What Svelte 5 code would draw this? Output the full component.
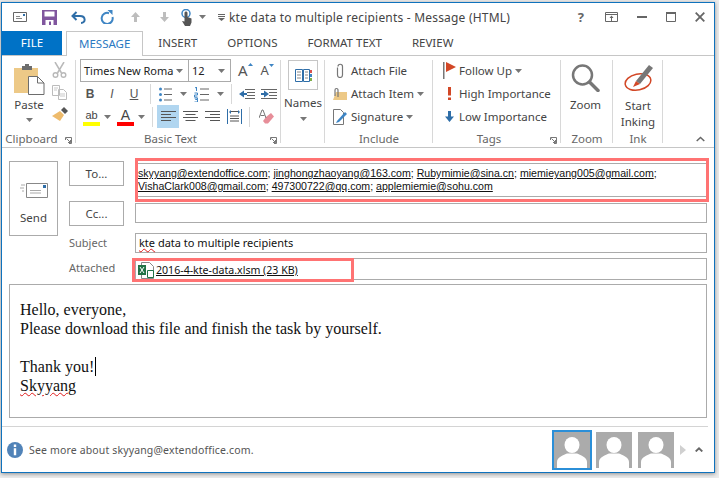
<script>
  const tabs = ['INSERT', 'OPTIONS', 'FORMAT TEXT', 'REVIEW'];
  const recipients = [
    ['skyyang@extendoffice.com', 'jinghongzhaoyang@163.com', 'Rubymimie@sina.cn', 'miemieyang005@gmail.com'],
    ['VishaClark008@gmail.com', '497300722@qq.com', 'applemiemie@sohu.com'],
  ];
</script>

{#snippet caret()}
  <svg class="caret" width="7" height="4" viewBox="0 0 7 4"><path d="M0 0h7L3.500 4z" fill="#777" /></svg>
{/snippet}

{#snippet launcher()}
  <svg class="launcher" width="7" height="7" viewBox="0 0 7 7"><path d="M.5 3V.5h6v6H4M1.500 1.500l4 4M5.500 3v2.500H3" fill="none" stroke="#777" /></svg>
{/snippet}

{#snippet avatar()}
  <svg width="36" height="36" viewBox="0 0 36 36">
    <rect width="36" height="36" fill="#ababab" />
    <ellipse cx="18" cy="13" rx="7.500" ry="8" fill="#fff" />
    <path d="M3 36v-6c0-5 7-7 10-8.500h10c3 1.500 10 3.500 10 8.500v6z" fill="#fff" />
  </svg>
{/snippet}

<div class="window">
  <header class="titlebar">
    <div class="qat">
      <svg width="14" height="10" viewBox="0 0 14 10"><path d="M.5.500h13v9H.5z" fill="none" stroke="#666" /><path d="M3 4.500h4M3 6.500h6" stroke="#888" /><path d="M10 2h2v2h-2z" fill="#2f6ea8" /></svg>
      <svg width="15" height="15" viewBox="0 0 15 15"><path d="M0 0h15v15H0z" fill="#80569e" /><path d="M2.500 1.500h10v5h-10z" fill="#fff" /><path d="M3.500 10h8v5h-8z" fill="#fff" /><path d="M7 11.500h2V15H7z" fill="#80569e" /></svg>
      <svg class="undo" width="15" height="13" viewBox="0 0 15 13"><path d="M5.500 1 1.500 5l4 4M2 5h7c6 0 6 7 1 7" fill="none" stroke="#2f6ea8" stroke-width="2" /></svg>
      <svg class="redo" width="14" height="14" viewBox="0 0 14 14"><path d="M9 3.200A5.500 5.500 0 1 0 12.500 7" fill="none" stroke="#3e85c4" stroke-width="2" /><path d="M7.500 0h5v5z" fill="#3e85c4" /></svg>
      <svg class="up" width="9" height="10" viewBox="0 0 9 10"><path d="M4.500 0 9 5H6v5H3V5H0z" fill="#bdbdbd" /></svg>
      <svg class="down" width="9" height="10" viewBox="0 0 9 10"><path d="M4.500 10 9 5H6V0H3v5H0z" fill="#bdbdbd" /></svg>
      <svg class="touch" width="12" height="17" viewBox="0 0 12 17"><circle cx="5" cy="4.500" r="4" fill="none" stroke="#3e85c4" stroke-width="1.500" /><path d="M3.500 4c0-2 3-2 3 0v4l4 1.500v4L9 17H4L1 12l2.500.5z" fill="#555" /></svg>
      {@render caret()}
      <svg class="more" width="7" height="7" viewBox="0 0 7 7"><path d="M0 .5h7M0 2.500h7" stroke="#666" /><path d="M0 4h7L3.500 7z" fill="#666" /></svg>
    </div>
    <h1>kte data to multiple recipients - Message (HTML)</h1>
    <div class="winctl">
      <span class="help">?</span>
      <svg width="13" height="10" viewBox="0 0 13 10"><path d="M.5.500h12v9H.5zM1 2.500h11" fill="none" stroke="#666" /><path d="M6.500 3.500 4.500 6h1.500v3h1V6h1.500z" fill="#666" /></svg>
      <svg width="10" height="3" viewBox="0 0 10 3"><path d="M0 0h10v2H0z" fill="#666" /></svg>
      <svg width="10" height="10" viewBox="0 0 10 10"><path d="M.5.500h9v9h-9z" fill="none" stroke="#666" /><path d="M0 0h10v2H0z" fill="#666" /></svg>
      <svg width="10" height="10" viewBox="0 0 10 10"><path d="m.700.700 8.600 8.600m0-8.600L.700 9.300" stroke="#666" stroke-width="1.800" /></svg>
    </div>
  </header>

  <nav class="tabs">
    <span class="file">FILE</span>
    <span class="tab active">MESSAGE</span>
    {#each tabs as tab}
      <span class="tab">{tab}</span>
    {/each}
  </nav>

  <section class="ribbon">
    <div class="group clipboard">
      <div class="content">
        <div class="paste">
          <svg width="31" height="31" viewBox="0 0 31 31">
            <path d="M0 4h24v25H0z" fill="#edc987" />
            <path d="M8 2h3V0h4v2h3v4H8z" fill="#6d6d6d" />
            <path d="M14.500 12.500h9l6.500 6.500v11.500H14.500z" fill="#fff" stroke="#6d6d6d" />
            <path d="M23.500 12.500v6.500H30" fill="none" stroke="#6d6d6d" />
          </svg>
          <span>Paste</span>
          {@render caret()}
        </div>
        <div class="paste-tools">
          <svg width="15" height="16" viewBox="0 0 15 16"><path d="M3 0l6.500 11M12 0 5.500 11" stroke="#b9b9b9" stroke-width="1.500" /><circle cx="3.500" cy="13" r="2.300" fill="none" stroke="#b9b9b9" stroke-width="1.400" /><circle cx="11.500" cy="13" r="2.300" fill="none" stroke="#b9b9b9" stroke-width="1.400" /></svg>
          <svg width="15" height="15" viewBox="0 0 15 15"><path d="M.5.500h7v10h-7zM6.500 4.500h5l3 3v7h-8z" fill="#fff" stroke="#bcbcbc" /><path d="M2 3h4M2 5h3M8 9h5M8 11h5" stroke="#c9c9c9" /></svg>
          <svg width="16" height="15" viewBox="0 0 16 15"><path d="M9 3l3-3 4 4-3 3z" fill="#555" /><path d="M8 4l4 4-4 6-8-5z" fill="#eebb6c" /></svg>
        </div>
      </div>
      <div class="label">Clipboard {@render launcher()}</div>
    </div>

    <div class="group basic">
      <div class="content column">
        <div class="row first">
          <span class="combo font">Times New Roma {@render caret()}</span>
          <span class="combo size">12 {@render caret()}</span>
          <span class="grow">A<svg width="5" height="3" viewBox="0 0 5 3"><path d="M0 3h5L2.500 0z" fill="#3e85c4" /></svg></span>
          <span class="shrink">A<svg width="5" height="3" viewBox="0 0 5 3"><path d="M0 0h5L2.500 3z" fill="#3e85c4" /></svg></span>
        </div>
        <div class="row second">
          <b class="fmt">B</b>
          <i class="fmt">I</i>
          <u class="fmt">U</u>
          <span class="sep"></span>
          <svg class="bullets" width="13" height="15" viewBox="0 0 13 15"><path d="M5 2h8M5 7.500h8M5 13h8" stroke="#666" /><circle cx="1.500" cy="2" r="1.500" fill="#3e85c4" /><circle cx="1.500" cy="7.500" r="1.500" fill="#3e85c4" /><circle cx="1.500" cy="13" r="1.500" fill="#3e85c4" /></svg>
          {@render caret()}
          <svg class="numbering" width="15" height="15" viewBox="0 0 15 15"><path d="M6 2h9M6 7.500h9M6 13h9" stroke="#666" /><path d="M1 1l1.500-1v4M.5 6h3v2h-3v2h3M.5 11h3v1.500H1.500h2V15h-3" fill="none" stroke="#3e85c4" /></svg>
          {@render caret()}
          <span class="sep"></span>
          <svg class="outdent" width="16" height="11" viewBox="0 0 16 11"><path d="M6 .500h10M8 3.500h8M8 6.500h8M6 9.500h10" stroke="#666" /><path d="M0 5l5-3.500V4h3v2H5v2.500z" fill="#2f6ea8" /></svg>
          <svg class="indent" width="16" height="11" viewBox="0 0 16 11"><path d="M0 .500h16M8 3.500h8M8 6.500h8M0 9.500h16" stroke="#666" /><path d="M8 5 3 1.500V4H0v2h3v2.500z" fill="#2f6ea8" /></svg>
        </div>
        <div class="row third">
          <span class="hl">ab<i></i></span>
          {@render caret()}
          <span class="color">A<i></i></span>
          {@render caret()}
          <span class="sep"></span>
          <span class="align on"><svg width="15" height="11" viewBox="0 0 15 11"><path d="M0 .500h15M0 3.500h10M0 6.500h15M0 9.500h10" stroke="#555" /></svg></span>
          <span class="align"><svg width="15" height="11" viewBox="0 0 15 11"><path d="M0 .500h15M2.500 3.500h10M0 6.500h15M2.500 9.500h10" stroke="#555" /></svg></span>
          <span class="align"><svg width="15" height="11" viewBox="0 0 15 11"><path d="M0 .500h15M5 3.500h10M0 6.500h15M5 9.500h10" stroke="#555" /></svg></span>
          <span class="align"><svg width="15" height="15" viewBox="0 0 15 15"><path d="M.5 0v15M14.500 0v15" stroke="#2f6ea8" /><path d="M3 2.500h9M3 7h9M3 9.500h9M3 12h9" stroke="#555" /><path d="M2 3l2-2v4zM13 3l-2-2v4z" fill="#2f6ea8" /></svg></span>
          <span class="sep"></span>
          <svg class="eraser" width="15" height="16" viewBox="0 0 15 16"><path d="M7 8l5-4 3 3.500-6 7H6L4 12z" fill="#e78e99" /><path d="M0 9 3 1h1l3 8M1.500 6.500h4" fill="none" stroke="#777" /></svg>
        </div>
      </div>
      <div class="label">Basic Text {@render launcher()}</div>
    </div>

    <div class="group names">
      <div class="content column center">
        <span class="names-box">
          <svg width="17" height="13" viewBox="0 0 17 13"><path d="M.5.500h7v12h-7zM8.500.500h6v12h-6z" fill="#fff" stroke="#2f6ea8" /><path d="M2 3h4M2 6h4M2 9h4M10 3h3M10 6h3M10 9h3" stroke="#888" /><path d="M15 1h2v3h-2z" fill="#d9534f" /><path d="M15 5h2v3h-2z" fill="#3e85c4" /><path d="M15 9h2v3h-2z" fill="#7fae4a" /></svg>
        </span>
        <span class="big-text">Names</span>
        {@render caret()}
      </div>
    </div>

    <div class="group include">
      <div class="content column list">
        <div class="item"><span class="slot"><svg width="10" height="15" viewBox="0 0 10 15"><path d="M2.500 4v7.500a2.500 2.500 0 0 0 5 0V3a2.200 2.200 0 0 0-4.500 0" transform="translate(0 .5)" fill="none" stroke="#777" stroke-width="1.200" /></svg></span>Attach File</div>
        <div class="item"><span class="slot"><svg width="14" height="14" viewBox="0 0 14 14"><path d="M3 5h11v8H0z" fill="#edc987" /><path d="M2 9V3a1.500 1.500 0 0 1 3 0v7" fill="none" stroke="#777" stroke-width="1.200" /></svg></span>Attach Item{@render caret()}</div>
        <div class="item"><span class="slot"><svg width="14" height="16" viewBox="0 0 14 16"><path d="M.5.500h7l3 3v12H.5z" fill="#fff" stroke="#777" /><path d="M4 12l8-9 2 2-8 8-3 1z" fill="#3e85c4" /></svg></span>Signature{@render caret()}</div>
      </div>
      <div class="label">Include</div>
    </div>

    <div class="group tags">
      <div class="content column list">
        <div class="item"><span class="slot"><svg width="13" height="17" viewBox="0 0 13 17"><path d="M0 0h1.500v17H0z" fill="#777" /><path d="M3 0l10 5-10 5z" fill="#d24726" /></svg></span>Follow Up{@render caret()}</div>
        <div class="item"><span class="slot"><svg width="13" height="13" viewBox="0 0 13 13"><path d="M5 0h3v8.500H5zM5 10.500h3V13H5z" fill="#d24726" /></svg></span>High Importance</div>
        <div class="item"><span class="slot"><svg width="13" height="11" viewBox="0 0 13 11"><path d="M6.500 11 11 5.500H8V0H5v5.500H2z" fill="#2f6ea8" /></svg></span>Low Importance</div>
      </div>
      <div class="label">Tags {@render launcher()}</div>
    </div>

    <div class="group zoom">
      <div class="content column center">
        <svg class="big-icon" width="29" height="28" viewBox="0 0 29 28"><circle cx="11.500" cy="11" r="9.500" fill="none" stroke="#777" stroke-width="2.500" /><path d="m18.500 18 8.500 8.500" stroke="#777" stroke-width="3.500" stroke-linecap="round" /></svg>
        <span class="big-text">Zoom</span>
      </div>
      <div class="label">Zoom</div>
    </div>

    <div class="group ink">
      <div class="content column center">
        <svg class="big-icon" width="29" height="29" viewBox="0 0 29 29"><ellipse cx="14" cy="18" rx="13" ry="8" transform="rotate(-12 14 18)" fill="none" stroke="#d24726" stroke-width="1.500" /><path d="M12 17 25 1l4 3-13 16z" fill="#777" /><path d="M9 23l3-6 4 3z" fill="#d24726" /></svg>
        <span class="big-text">Start<br />Inking</span>
      </div>
      <div class="label">Ink</div>
    </div>

    <svg class="collapse" width="9" height="6" viewBox="0 0 9 6"><path d="M.7 5 4.500 1.500 8.300 5" fill="none" stroke="#666" stroke-width="1.500" /></svg>
  </section>

  <section class="compose">
    <button class="send">
      <svg width="28" height="15" viewBox="0 0 28 15"><path d="M6.500.500h21v14h-21z" fill="#fff" stroke="#888" /><path d="M10 7.500h11M10 10h11" stroke="#aaa" /><path d="M23 2h3v3h-3z" fill="#2f6ea8" /><path d="M1 2h4M0 5h4M2 8h2" stroke="#aaa" /></svg>
      <span>Send</span>
    </button>
    <div class="fields">
      <button class="addr to">To...</button>
      <div class="input to-input highlighted">
        {#each recipients as line}
          <div>
            {#each line as mail, i}<u>{mail}</u>{i < line.length - 1 || line.length === 4 ? '; ' : ''}{/each}
          </div>
        {/each}
      </div>
      <button class="addr cc">Cc...</button>
      <div class="input cc-input"></div>
      <span class="field-label">Subject</span>
      <div class="input subject"><span class="wavy">kte</span> data to multiple recipients</div>
      <span class="field-label">Attached</span>
      <div class="input attach-input">
        <div class="attachment">
          <svg width="18" height="17" viewBox="0 0 18 17"><path d="M3.500.500h8l4 4v12h-12z" fill="#fff" stroke="#888" /><path d="M0 3h8v10H0z" fill="#217346" /><path d="m2 5 4 6m0-6-4 6" stroke="#fff" /><path d="M9.500 8.500h6v7h-6z" fill="#fff" stroke="#217346" /></svg>
          <u>2016-4-kte-data.xlsm (23 KB)</u>
        </div>
      </div>
    </div>
  </section>

  <article class="message">
    <p>Hello, everyone,</p>
    <p>Please download this file and finish the task by yourself.</p>
    <p>&nbsp;</p>
    <p>Thank you!<span class="cursor"></span></p>
    <p><span class="wavy">Skyyang</span></p>
  </article>

  <footer class="people">
    <svg width="16" height="16" viewBox="0 0 16 16"><circle cx="8" cy="8" r="8" fill="#5183b8" /><path d="M6.800 2.500h2.400v2.400H6.800zM6.800 6.300h2.400v7H6.800z" fill="#fff" /></svg>
    <span class="see-more">See more about skyyang@extendoffice.com.</span>
    <div class="avatars">
      <span class="current">{@render avatar()}</span>
      {@render avatar()}
      {@render avatar()}
      <svg class="next" width="6" height="10" viewBox="0 0 6 10"><path d="M0 0l6 5-6 5z" fill="#d0d0d0" /></svg>
      <svg class="hide" width="8" height="5" viewBox="0 0 8 5"><path d="M.7 4.500 4 1.300l3.300 3.200" fill="none" stroke="#666" stroke-width="1.800" /></svg>
    </div>
  </footer>
</div>

<style>
  :global(body) {
    background: #ececec;
    height: 478px;
    overflow: hidden;
  }

  .window {
    box-sizing: border-box;
    width: 714px;
    height: 471px;
    margin: 2px 0 0 1px;
    background: #fff;
    border: 1px solid #0f72bd;
    box-shadow: 0 1px 4px #8f8f8f;
    display: flex;
    flex-direction: column;
    font-family: 'Noto Sans', sans-serif;
    font-size: 11.500px;
    color: #444;
  }

  .titlebar {
    height: 28px;
    flex: none;
    display: flex;
    align-items: center;
  }

  .qat {
    display: flex;
    align-items: center;
    gap: 15px;
    padding-left: 11px;
    width: 224px;
    box-sizing: border-box;
    flex: none;
  }

  .qat .undo,
  .qat .redo {
    margin-left: -1px;
  }

  .qat .up {
    margin-left: 2px;
  }

  .qat .down {
    margin-left: 5px;
  }

  .qat .touch {
    margin-left: -3px;
  }

  .qat .touch + .caret {
    margin-left: -9px;
  }

  .qat .more {
    margin-left: -3px;
  }

  h1 {
    margin: 0 0 0 3px;
    font-size: 12px;
    font-weight: 400;
    letter-spacing: 0.2px;
    color: #444;
    white-space: nowrap;
  }

  .winctl {
    margin-left: auto;
    display: flex;
    align-items: center;
    gap: 19px;
    padding-right: 9px;
  }

  .help {
    font-weight: 700;
    font-size: 13px;
    color: #666;
    margin-right: 2px;
  }

  .tabs {
    height: 25px;
    flex: none;
    display: flex;
    border-bottom: 1px solid #c6c6c6;
    box-sizing: border-box;
  }

  .file {
    width: 60px;
    background: #0072c6;
    color: #fff;
    text-align: center;
    line-height: 24px;
  }

  .tab {
    padding: 0 15px;
    line-height: 24px;
    white-space: nowrap;
  }

  .tab.active {
    margin-left: 4px;
    color: #2b79c2;
    height: 25px;
    box-sizing: border-box;
    border: 1px solid #c6c6c6;
    border-bottom: 0;
    background: #fff;
    padding: 0 12px;
    line-height: 23px;
    z-index: 1;
  }

  .ribbon {
    height: 92px;
    flex: none;
    display: flex;
    box-sizing: border-box;
    border-bottom: 1px solid #c6c6c6;
    position: relative;
  }

  .group {
    display: flex;
    flex-direction: column;
    position: relative;
    box-sizing: border-box;
    flex: none;
  }

  .group::after {
    content: '';
    position: absolute;
    right: 0;
    top: 4px;
    bottom: 4px;
    width: 1px;
    background: #d8d8d8;
  }

  .clipboard { width: 74px; }
  .basic { width: 205px; }
  .names { width: 44px; }
  .include { width: 108px; }
  .tags { width: 128px; }
  .zoom { width: 52px; }
  .ink { width: 50px; }

  .content {
    flex: 1;
    display: flex;
    min-height: 0;
  }

  .column {
    flex-direction: column;
  }

  .center {
    align-items: center;
  }

  .label {
    height: 17px;
    text-align: center;
    color: #666;
    font-size: 11.500px;
    line-height: 18px;
    position: relative;
  }

  .clipboard .label {
    padding-right: 15px;
  }

  .basic .label,
  .tags .label {
    padding-right: 16px;
  }

  .launcher {
    position: absolute;
    right: 4px;
    top: 7px;
  }

  .paste {
    width: 40px;
    margin-left: 7px;
    padding-top: 8px;
    display: flex;
    flex-direction: column;
    align-items: center;
  }

  .paste span {
    margin-top: 1px;
    line-height: 18px;
  }

  .paste .caret {
    margin-top: 4px;
  }

  .paste-tools {
    display: flex;
    flex-direction: column;
    gap: 7px;
    margin: 6px 0 0 3px;
  }

  .row {
    display: flex;
    align-items: center;
  }

  .first {
    height: 23px;
    margin: 3px 0 0 4px;
  }

  .combo {
    height: 23px;
    box-sizing: border-box;
    border: 1px solid #ababab;
    display: flex;
    align-items: center;
    justify-content: space-between;
    padding: 0 5px 0 3px;
    font-size: 11px;
    color: #222;
    white-space: nowrap;
    overflow: hidden;
  }

  .font {
    width: 109px;
  }

  .size {
    width: 43px;
    margin-left: -1px;
  }

  .grow,
  .shrink {
    display: flex;
    align-items: flex-start;
    color: #555;
    line-height: 1;
  }

  .grow {
    font-size: 15px;
    margin-left: 7px;
  }

  .shrink {
    font-size: 13px;
    margin-left: 8px;
  }

  .second {
    height: 20px;
    margin-top: 2px;
  }

  .fmt {
    width: 22px;
    text-align: center;
    font-family: 'Liberation Sans', sans-serif;
    font-size: 12px;
    color: #555;
  }

  .second .fmt:first-child {
    margin-left: 3px;
  }

  .sep {
    width: 1px;
    height: 20px;
    background: #d8d8d8;
    flex: none;
  }

  .second .fmt + .sep {
    margin: 0 8px 0 5px;
  }

  .second > .caret {
    margin-left: 8px;
  }

  .numbering {
    margin-left: 7px;
  }

  .second > .caret + .sep {
    margin: 0 7px 0 7px;
  }

  .indent {
    margin-left: 6px;
  }

  .third {
    height: 23px;
    margin: 1px 0 0 7px;
  }

  .hl,
  .color {
    position: relative;
    width: 17px;
    text-align: center;
    line-height: 14px;
    height: 18px;
    font-family: 'Liberation Sans', sans-serif;
    flex: none;
  }

  .hl {
    font-size: 11px;
  }

  .color {
    font-size: 14px;
    margin-left: 6px;
  }

  .hl i,
  .color i {
    position: absolute;
    left: 0;
    right: 0;
    bottom: 0;
    height: 4px;
    background: #ff0;
  }

  .color i {
    background: #f00;
  }

  .third > .caret {
    margin-left: 4px;
  }

  .third > .caret + .sep {
    margin: 0 4px 0 7px;
  }

  .align + .sep {
    margin-left: 4px;
  }

  .align {
    width: 22px;
    height: 23px;
    display: flex;
    align-items: center;
    justify-content: center;
    flex: none;
  }

  .align.on {
    background: #b1d6f0;
  }

  .eraser {
    margin-left: 9px;
  }

  .names-box {
    margin-top: 4px;
    box-sizing: border-box;
    width: 30px;
    height: 30px;
    border: 1px solid #c6c6c6;
    display: flex;
    align-items: center;
    justify-content: center;
  }

  .big-text {
    text-align: center;
    line-height: 16px;
    margin-top: 5px;
    color: #444;
  }

  .names .caret {
    margin-top: 6px;
  }

  .list {
    padding-top: 3px;
  }

  .item {
    height: 23px;
    display: flex;
    align-items: center;
    white-space: nowrap;
  }

  .item .caret {
    margin-left: 3px;
  }

  .slot {
    display: flex;
    justify-content: center;
    flex: none;
  }

  .include .item {
    padding-left: 7px;
  }

  .include .slot {
    width: 15px;
    margin-right: 4px;
  }

  .tags .item {
    padding-left: 10px;
  }

  .tags .slot {
    width: 13px;
    margin-right: 3px;
  }

  .big-icon {
    margin-top: 8px;
  }

  .zoom .big-icon,
  .zoom .big-text {
    margin-right: 3px;
  }

  .collapse {
    position: absolute;
    right: 9px;
    bottom: 5px;
  }

  .compose {
    display: flex;
    padding: 13px 7px 0;
    flex: none;
  }

  .send,
  .addr {
    box-sizing: border-box;
    background: #fff;
    border: 1px solid #ababab;
    color: #444;
    font: inherit;
    padding: 0;
  }

  .send {
    width: 49px;
    height: 75px;
    display: flex;
    flex-direction: column;
    align-items: center;
    flex: none;
  }

  .send svg {
    margin-top: 21px;
  }

  .send span {
    margin-top: 12px;
    line-height: 16px;
  }

  .fields {
    flex: 1;
    margin-left: 11px;
    display: grid;
    grid-template-columns: 55px 1fr;
    column-gap: 11px;
    grid-template-rows: 42px 30px 25px 26px;
  }

  .addr {
    height: 25px;
  }

  .cc {
    margin-top: -2px;
  }

  .input {
    box-sizing: border-box;
    border: 1px solid #ababab;
    font-size: 11px;
    padding: 0 3px;
    position: relative;
    color: #111;
    white-space: nowrap;
  }

  .to-input {
    margin-top: 2px;
    height: 34px;
    line-height: 13px;
    padding: 3px 2px 0;
    font-family: 'Liberation Sans', sans-serif;
    font-size: 10.600px;
  }

  .cc-input,
  .subject {
    height: 20px;
  }

  .highlighted::after {
    content: '';
    position: absolute;
    inset: -6px -3px -6px -1px;
    border: 3px solid #ff7373;
    pointer-events: none;
  }

  .subject {
    line-height: 18px;
  }

  .field-label {
    color: #666;
    font-size: 11px;
    line-height: 20px;
  }

  .attach-input {
    height: 22px;
  }

  .attachment {
    position: absolute;
    left: -4px;
    top: -1px;
    width: 222px;
    height: 24px;
    box-sizing: border-box;
    border: 3px solid #ff7373;
    display: flex;
    align-items: center;
    padding-left: 3px;
    font-size: 10.600px;
  }

  .message {
    margin: 0 7px;
    box-sizing: border-box;
    height: 134px;
    flex: none;
    border: 1px solid #ababab;
    padding: 15px 10px 0;
    font-family: 'Liberation Serif', serif;
    font-size: 16px;
    line-height: 19px;
    color: #111;
  }

  .message p {
    margin: 0;
  }

  .cursor {
    display: inline-block;
    width: 1px;
    height: 19px;
    background: #000;
    vertical-align: -4px;
    margin-left: 1px;
  }

  .wavy {
    text-decoration: underline wavy #e01b1b 1px;
    text-underline-offset: 1px;
  }

  .people {
    margin-top: 8px;
    flex: 1;
    border-top: 1px solid #d4d4d4;
    display: flex;
    align-items: center;
    padding-left: 5px;
    margin-right: 6px;
    gap: 6px;
  }

  .see-more {
    font-size: 10.500px;
    color: #555;
    letter-spacing: 0.15px;
  }

  .avatars {
    margin-left: auto;
    display: flex;
    align-items: center;
    gap: 6px;
    padding-right: 5px;
  }

  .avatars svg {
    display: block;
  }

  .current {
    border: 2px solid #2b8fd8;
    margin-right: -2px;
  }

  .hide {
    margin-left: 3px;
  }
</style>
